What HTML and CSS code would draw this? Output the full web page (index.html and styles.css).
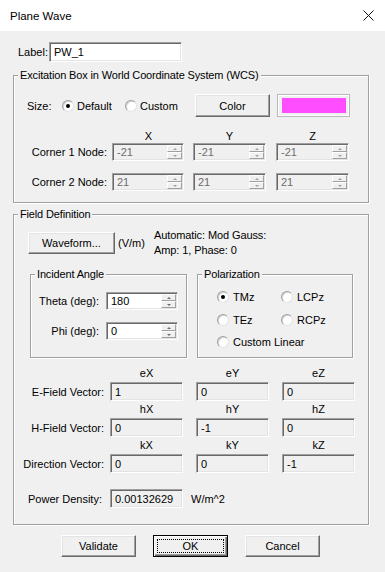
FILE: index.html
```html
<!DOCTYPE html>
<html>
<head>
<meta charset="utf-8">
<title>Plane Wave</title>
<link rel="stylesheet" href="styles.css">
</head>
<body>
<div class="window">
  <div class="titlebar">
    <span class="title">Plane Wave</span>
    <svg class="close" width="11" height="11" viewBox="0 0 11 11"><path d="M0.5 0.5 L10.5 10.5 M10.5 0.5 L0.5 10.5" stroke="#111" stroke-width="1" fill="none"/></svg>
  </div>
  <div class="content">
    <div class="label-row">
      <span class="lbl">Label:</span>
      <div class="edit label-edit"><span class="val">PW_1</span></div>
    </div>

    <fieldset class="group wcs">
      <legend>Excitation Box in World Coordinate System (WCS)</legend>
      <div class="size-row">
        <span class="size-label">Size:</span>
        <span class="opt w-default"><span class="radio checked"></span><span>Default</span></span>
        <span class="opt w-custom"><span class="radio"></span><span>Custom</span></span>
        <div class="btn color-btn">Color</div>
        <div class="swatch"><div class="swatch-fill"></div></div>
      </div>
      <div class="coord-row head">
        <span class="coord-label"></span>
        <span class="c1"><span class="hd">X</span></span>
        <span class="c2"><span class="hd">Y</span></span>
        <span class="c3"><span class="hd">Z</span></span>
      </div>
      <div class="coord-row">
        <span class="coord-label">Corner 1 Node:</span>
        <span class="c1"><span class="edit spin disabled"><span class="val">-21</span><span class="spinbtns"><i class="up"></i><i class="dn"></i></span></span></span>
        <span class="c2"><span class="edit spin disabled"><span class="val">-21</span><span class="spinbtns"><i class="up"></i><i class="dn"></i></span></span></span>
        <span class="c3"><span class="edit spin disabled"><span class="val">-21</span><span class="spinbtns"><i class="up"></i><i class="dn"></i></span></span></span>
      </div>
      <div class="coord-row row2">
        <span class="coord-label">Corner 2 Node:</span>
        <span class="c1"><span class="edit spin disabled"><span class="val">21</span><span class="spinbtns"><i class="up"></i><i class="dn"></i></span></span></span>
        <span class="c2"><span class="edit spin disabled"><span class="val">21</span><span class="spinbtns"><i class="up"></i><i class="dn"></i></span></span></span>
        <span class="c3"><span class="edit spin disabled"><span class="val">21</span><span class="spinbtns"><i class="up"></i><i class="dn"></i></span></span></span>
      </div>
    </fieldset>

    <fieldset class="group field">
      <legend>Field Definition</legend>
      <div class="wave-row">
        <div class="btn wave-btn">Waveform...</div>
        <span class="unit">(V/m)</span>
        <div class="auto">
          <div>Automatic: Mod Gauss:</div>
          <div>Amp: 1, Phase: 0</div>
        </div>
      </div>

      <div class="sub-row">
        <fieldset class="group incident">
          <legend>Incident Angle</legend>
          <div class="angle-row">
            <span class="angle-label">Theta (deg):</span>
            <span class="edit spin angle-edit"><span class="val">180</span><span class="spinbtns"><i class="up"></i><i class="dn"></i></span></span>
          </div>
          <div class="angle-row second">
            <span class="angle-label">Phi (deg):</span>
            <span class="edit spin angle-edit"><span class="val">0</span><span class="spinbtns"><i class="up"></i><i class="dn"></i></span></span>
          </div>
        </fieldset>
        <fieldset class="group polar">
          <legend>Polarization</legend>
          <div class="pol-grid">
            <span class="opt pr1"><span class="radio checked"></span><span>TMz</span></span>
            <span class="opt pr1"><span class="radio"></span><span>LCPz</span></span>
            <span class="opt"><span class="radio"></span><span>TEz</span></span>
            <span class="opt"><span class="radio"></span><span>RCPz</span></span>
            <span class="opt span2"><span class="radio"></span><span>Custom Linear</span></span>
          </div>
        </fieldset>
      </div>

      <div class="vectors">
        <div class="vec-head">
          <span class="vec-label"></span>
          <span class="v1"><span class="hd">eX</span></span>
          <span class="v2"><span class="hd">eY</span></span>
          <span class="v3"><span class="hd">eZ</span></span>
        </div>
        <div class="vec-row">
          <span class="vec-label">E-Field Vector:</span>
          <span class="v1"><span class="edit ro"><span class="val">1</span></span></span>
          <span class="v2"><span class="edit ro"><span class="val">0</span></span></span>
          <span class="v3"><span class="edit ro"><span class="val">0</span></span></span>
        </div>
        <div class="vec-head">
          <span class="vec-label"></span>
          <span class="v1"><span class="hd">hX</span></span>
          <span class="v2"><span class="hd">hY</span></span>
          <span class="v3"><span class="hd">hZ</span></span>
        </div>
        <div class="vec-row">
          <span class="vec-label">H-Field Vector:</span>
          <span class="v1"><span class="edit ro"><span class="val">0</span></span></span>
          <span class="v2"><span class="edit ro"><span class="val">-1</span></span></span>
          <span class="v3"><span class="edit ro"><span class="val">0</span></span></span>
        </div>
        <div class="vec-head">
          <span class="vec-label"></span>
          <span class="v1"><span class="hd">kX</span></span>
          <span class="v2"><span class="hd">kY</span></span>
          <span class="v3"><span class="hd">kZ</span></span>
        </div>
        <div class="vec-row">
          <span class="vec-label">Direction Vector:</span>
          <span class="v1"><span class="edit ro"><span class="val">0</span></span></span>
          <span class="v2"><span class="edit ro"><span class="val">0</span></span></span>
          <span class="v3"><span class="edit ro"><span class="val">-1</span></span></span>
        </div>
      </div>

      <div class="power-row">
        <span class="power-label">Power Density:</span>
        <span class="edit ro power-edit"><span class="val">0.00132629</span></span>
        <span class="power-unit">W/m^2</span>
      </div>
    </fieldset>

    <div class="buttons">
      <div class="btn dlg-btn">Validate</div>
      <div class="btn dlg-btn default"><span class="focus">OK</span></div>
      <div class="btn dlg-btn">Cancel</div>
    </div>
  </div>
</div>
</body>
</html>
```

FILE: styles.css
```css
html, body {
  margin: 0;
  padding: 0;
}
body {
  background: #f0f0f0;
  font-family: "Liberation Sans", Arial, sans-serif;
  font-size: 11px;
  color: #000;
}
.window {
  width: 385px;
  height: 572px;
  overflow: hidden;
  background: #f0f0f0;
}
.titlebar {
  height: 31px;
  background: #fff;
  display: flex;
  align-items: center;
  justify-content: space-between;
  padding: 0 11px 0 10px;
}
.title {
  font-size: 11.5px;
}
.close {
  display: block;
}
.content {
  padding: 11px 16px 0 13px;
}

/* edit boxes */
.edit {
  box-sizing: border-box;
  display: flex;
  align-items: center;
  height: 18px;
  border: 1px solid;
  border-color: #a0a0a0 #fff #fff #a0a0a0;
  box-shadow: inset 1px 1px 0 #696969, inset -1px -1px 0 #e3e3e3;
  background: #fff;
  padding-left: 4px;
  white-space: nowrap;
}
.edit.disabled {
  background: #f0f0f0;
  color: #6d6d6d;
}
.edit.ro {
  background: #f0f0f0;
  height: 19px;
  width: 73px;
}
.spinbtns {
  align-self: stretch;
  margin: 1px 1px 1px auto;
  width: 15px;
  display: flex;
  flex-direction: column;
}
.spinbtns i {
  flex: 1;
  box-sizing: border-box;
  border: 1px solid;
  border-color: #fff #a0a0a0 #a0a0a0 #fff;
  background: #f0f0f0;
  display: flex;
  align-items: center;
  justify-content: center;
}
.spinbtns i::after {
  content: "";
  width: 0;
  height: 0;
  border-left: 2px solid transparent;
  border-right: 2px solid transparent;
}
.spinbtns .up::after {
  border-bottom: 2px solid #6d6d6d;
}
.spinbtns .dn::after {
  border-top: 2px solid #6d6d6d;
}
.disabled .spinbtns .up::after {
  border-bottom-color: #a0a0a0;
}
.disabled .spinbtns .dn::after {
  border-top-color: #a0a0a0;
}

/* buttons */
.btn {
  box-sizing: border-box;
  display: flex;
  align-items: center;
  justify-content: center;
  height: 22px;
  border: 1px solid;
  border-color: #fff #696969 #696969 #fff;
  box-shadow: inset -1px -1px 0 #a0a0a0, inset 1px 1px 0 #e3e3e3;
  background: #f0f0f0;
  white-space: nowrap;
}
.btn.default {
  border-color: #000;
  box-shadow: inset 1px 1px 0 #fff, inset -1px -1px 0 #696969, inset -2px -2px 0 #a0a0a0;
}
.btn .focus {
  flex: 1;
  align-self: stretch;
  margin: 3px;
  border: 1px dotted #000;
  display: flex;
  align-items: center;
  justify-content: center;
}

/* radios */
.opt {
  display: flex;
  align-items: center;
  gap: 3px;
  white-space: nowrap;
}
.radio {
  box-sizing: border-box;
  display: inline-flex;
  align-items: center;
  justify-content: center;
  width: 12px;
  height: 12px;
  border-radius: 50%;
  border: 1px solid;
  border-color: #a0a0a0 #e3e3e3 #e3e3e3 #a0a0a0;
  box-shadow: inset 1px 1px 0 #d4d4d4;
  background: #fff;
  flex: none;
}
.radio.checked::after {
  content: "";
  width: 4px;
  height: 4px;
  border-radius: 50%;
  background: #000;
}

/* group boxes */
fieldset.group {
  margin: 0;
  padding: 0;
  min-width: 0;
  border: 1px solid #a0a0a0;
  box-shadow: inset 1px 1px 0 #fff, 1px 1px 0 #fff;
}
fieldset.group > legend {
  margin-left: 4px;
  padding: 0 2px;
  line-height: 14px;
  background: #f0f0f0;
  letter-spacing: -0.15px;
}

/* label row */
.label-row {
  display: flex;
  align-items: center;
  height: 20px;
  padding-left: 5px;
}
.label-row .lbl {
  width: 31px;
}
.label-edit {
  width: 133px;
  height: 20px;
}

/* WCS */
.wcs {
  margin-top: 6px !important;
  padding-bottom: 11px !important;
}
.size-row {
  display: flex;
  align-items: center;
  margin-top: 12px;
  padding-left: 13px;
  height: 23px;
}
.size-label {
  width: 35px;
}
.w-default {
  width: 63px;
}
.w-custom {
  width: 70px;
}
.color-btn {
  width: 75px;
  height: 23px;
}
.swatch {
  box-sizing: border-box;
  margin-left: 7px;
  width: 73px;
  height: 23px;
  border: 1px solid #b9b9b9;
  box-shadow: inset 0 0 0 1px #fff;
  padding: 3px 3px 3px 4px;
}
.swatch-fill {
  height: 100%;
  background: #ff4dff;
}
.coord-row {
  display: flex;
  align-items: center;
  height: 18px;
}
.coord-row.head {
  margin-top: 13px;
  height: 13px;
  line-height: 13px;
}
.coord-row.row2 {
  margin-top: 12px;
}
.coord-label {
  box-sizing: border-box;
  width: 98px;
  text-align: right;
  padding-right: 5px;
  white-space: nowrap;
}
.c1 { width: 81px; }
.c2 { width: 83px; }
.c3 { width: 73px; }
.c1 .edit { width: 72px; }
.c2 .edit, .c3 .edit { width: 73px; }
.hd {
  display: block;
  width: 73px;
  text-align: center;
}

/* field definition */
.field {
  margin-top: 4px !important;
  padding-bottom: 16px !important;
}
.wave-row {
  display: flex;
  align-items: center;
  height: 30px;
  margin-top: 7px;
  padding-left: 14px;
}
.wave-btn {
  width: 87px;
}
.unit {
  margin-left: 3px;
  width: 36px;
}
.auto {
  line-height: 15px;
  letter-spacing: -0.1px;
}
.sub-row {
  display: flex;
  margin-top: 9px;
  padding-left: 16px;
}
.incident {
  width: 157px;
  box-sizing: border-box;
  padding-bottom: 17px !important;
}
.polar {
  width: 156px;
  box-sizing: border-box;
  margin-left: 10px !important;
}
.angle-row {
  display: flex;
  align-items: center;
  margin-top: 11px;
}
.angle-row.second {
  margin-top: 12px;
}
.angle-label {
  box-sizing: border-box;
  width: 75px;
  text-align: right;
  padding-right: 7px;
}
.angle-edit {
  width: 72px;
}
.pol-grid {
  display: grid;
  grid-template-columns: 64px 1fr;
  grid-template-rows: 23px 22px 22px;
  margin-top: 5px;
  padding-left: 19px;
  gap: 0;
}
.pol-grid .opt {
  gap: 4px;
}
.pol-grid .pr1 {
  padding-bottom: 1px;
}
.span2 {
  grid-column: 1 / 3;
}
.vectors {
  margin-top: 8px;
}
.vec-head {
  display: flex;
  height: 14px;
  line-height: 14px;
  margin-top: 1px;
}
.vec-head:first-child {
  margin-top: 0;
}
.vec-row {
  display: flex;
  align-items: center;
  margin-top: 2px;
  height: 19px;
}
.vec-label {
  box-sizing: border-box;
  width: 96px;
  text-align: right;
  padding-right: 6px;
  white-space: nowrap;
}
.v1, .v2 { width: 86px; }
.v3 { width: 73px; }
.power-row {
  display: flex;
  align-items: center;
  margin-top: 16px;
  padding-left: 14px;
}
.power-label {
  width: 82px;
  white-space: nowrap;
}
.power-edit {
  width: 110px;
  height: 20px;
}
.power-unit {
  margin-left: 8px;
}

/* dialog buttons */
.buttons {
  display: flex;
  justify-content: center;
  gap: 17px;
  margin-top: 10px;
  padding-right: 1px;
}
.dlg-btn {
  width: 75px;
  height: 22px;
}
```
